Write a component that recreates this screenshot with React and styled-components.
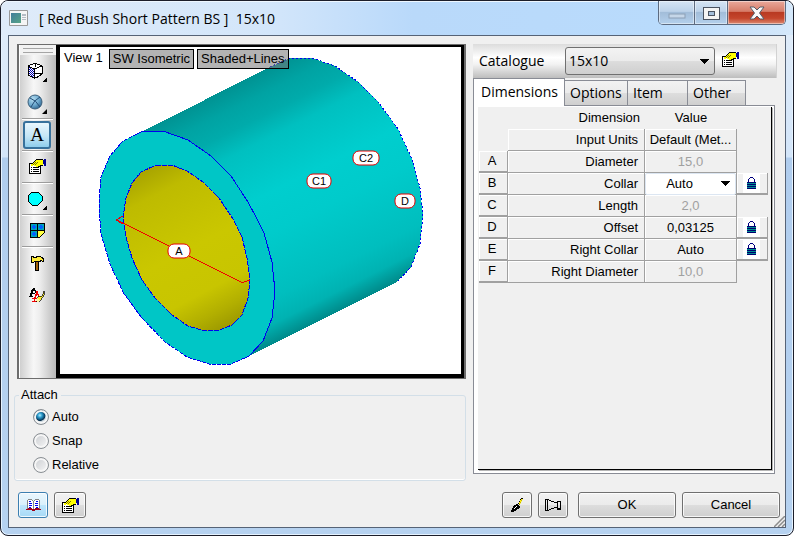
import React, { useState } from "react";
import styled, { createGlobalStyle, css } from "styled-components";

const ui = '"Liberation Sans", Arial, sans-serif';
const humanist = '"Open Sans", "Noto Sans", sans-serif';

const GlobalStyle = createGlobalStyle`
  *, *::before, *::after { box-sizing: border-box; }
  body { margin: 0; background: #fff; font: 13px/16px ${ui}; color: #000; }
  button, input, select { font: inherit; color: inherit; margin: 0; padding: 0; }
  svg { display: block; }
`;

const Window = styled.div`
  min-height: 100vh;
  display: flex;
  flex-direction: column;
  padding: 0 7px 7px;
  border: 1px solid #1c1e2a;
  border-radius: 8px;
  overflow: hidden;
  background: linear-gradient(#e2edf9 0, #d3e5f9 156px, #b0cdee 157px, #b6d2f0 100%);
  box-shadow: inset 0 0 0 1px #e6f3ff;
`;

const TitleBar = styled.header`
  display: flex;
  align-items: flex-start;
  height: 34px;
  margin: 0 -7px;
  padding: 0 7px 0 8px;
  border-radius: 7px 7px 0 0;
  background: linear-gradient(90deg, #dfebf9 0, #d3e6fa 34%, #b9d9fa 52%, #b9dbfc 84%, #d5e8fa 100%);
  box-shadow: inset 0 1px 0 #eef7ff;
`;

const AppIcon = styled.span`
  margin: 9px 11px 0 0;
`;

const Title = styled.h1`
  flex: 1;
  margin: 8px 0 0;
  font: 14px/20px ${humanist};
  white-space: pre;
`;

const WindowControls = styled.div`
  display: flex;
  border: 1px solid #5d6b80;
  border-top: 0;
  border-radius: 0 0 5px 5px;
  overflow: hidden;
`;

const ControlButton = styled.button`
  display: grid;
  place-items: center;
  width: ${(p) => p.$width}px;
  height: 23px;
  border: 0;
  border-left: ${(p) => (p.$first ? "0" : "1px solid #5d6b80")};
  background: ${(p) =>
    p.$danger
      ? "linear-gradient(#e9a99b 0, #d67c68 45%, #b93a22 50%, #c4452b 75%, #dc8a72 100%)"
      : "linear-gradient(#d5e4f4 0, #bcd2e9 45%, #a2bdd9 50%, #b4d0ec 100%)"};
  box-shadow: inset 0 0 0 1px rgba(255, 255, 255, 0.45);
`;

const Client = styled.main`
  position: relative;
  flex: 1;
  display: flex;
  flex-direction: column;
  gap: 11px;
  padding: 8px 5px 9px;
  border: 1px solid #566376;
  background: #f0f0f0;
`;

const Workspace = styled.div`
  flex: 1;
  display: flex;
  gap: 7px;
`;

const ModelColumn = styled.section`
  flex: 1;
  min-width: 0;
  display: flex;
  flex-direction: column;
  gap: 8px;
`;

const Viewer = styled.div`
  flex: 1;
  display: flex;
  margin-left: 3px;
  border: 2px solid #6d6d6d;
  border-width: 1px 2px 1px 2px;
  background: #000;
`;

const Toolbar = styled.div`
  width: 37px;
  display: flex;
  flex-direction: column;
  align-items: center;
  padding-right: 2px;
  border-left: 1px solid #fff;
  background: linear-gradient(90deg, #cfcfcf 0, #f7f7f7 38%, #ededed 55%, #b9b9b9 100%);
`;

const Grip = styled.div`
  align-self: stretch;
  margin-right: -2px;
  height: 10px;
  padding: 3px 3px 2px;
  background: #f2f2f2;
  &::before {
    content: "";
    display: block;
    height: 5px;
    border: solid #a5a5a5;
    border-width: 1px 0;
  }
`;

const ToolSlot = styled.div`
  width: 31px;
  height: 32px;
  display: grid;
  place-items: center;
  border-bottom: ${(p) => (p.$rule ? "1px solid #9c9c9c" : "0")};
  box-shadow: ${(p) => (p.$rule ? "0 1px 0 #fff" : "none")};
`;

const ToolButton = styled.button`
  width: 28px;
  height: 28px;
  display: grid;
  place-items: center;
  border: 2px solid transparent;
  border-radius: 3px;
  background: none;
  ${(p) =>
    p.$active &&
    css`
      border-color: #37719c;
      background: linear-gradient(#e8f6fd, #c4e5f6 55%, #8ecdec);
    `}
`;

const ToolLetter = styled.span`
  font: 19px/20px "Liberation Serif", serif;
`;

const Viewport = styled.div`
  position: relative;
  flex: 1;
  min-width: 0;
  margin: 2px 3px 4px 4px;
  background: #fff;
  overflow: hidden;
`;

const Scene = styled.svg`
  width: 100%;
  height: 100%;
`;

const ViewLabels = styled.div`
  position: absolute;
  top: 2px;
  left: 4px;
  display: flex;
  gap: 3px;
  line-height: 18px;
`;

const ViewName = styled.span`
  margin-right: 3px;
`;

const ViewButton = styled.button`
  height: 20px;
  padding: 0 3px;
  border: 1px solid #000;
  background: rgba(120, 120, 120, 0.56);
`;

const Group = styled.fieldset`
  height: 94px;
  margin: 0;
  padding: 2px 0 0 18px;
  border: 1px solid #d3dfe8;
  border-radius: 3px;
  box-shadow: inset 0 -1px 0 #fff;
`;

const Legend = styled.legend`
  margin-left: -14px;
  padding: 0 3px 0 2px;
`;

const RadioLabel = styled.label`
  display: flex;
  align-items: center;
  gap: 3px;
  height: 24px;
  line-height: 20px;
`;

const Radio = styled.input`
  appearance: none;
  width: 16px;
  height: 16px;
  border: 1px solid #8a8f94;
  border-radius: 50%;
  background: linear-gradient(135deg, #c9ccd0, #f8f8f8);
  box-shadow: inset 0 0 0 2px #f6f6f6;
  &:checked {
    background: radial-gradient(circle at 42% 38%, #b5ecff 0, #2fa0d0 18%, #0b4a73 38%, #0b304c 44%, #c8d4dc 50%);
  }
`;

const Properties = styled.section`
  width: 304px;
  display: flex;
  flex-direction: column;
  margin: 0 3px 7px 0;
`;

const CatalogueBar = styled.div`
  display: flex;
  align-items: center;
  height: 34px;
  padding: 0 6px;
  border: 1px solid #d2d2d2;
  border-width: 0 1px 0 0;
  background: linear-gradient(#dcdcdc 0, #fff 40%, #f2f2f2 60%, #bdbdbd 100%);
  font: 14px/20px ${humanist};
`;

const CatalogueLabel = styled.label`
  flex: 1;
`;

const SelectBox = styled.div`
  display: grid;
  align-items: center;
  & > * { grid-area: 1 / 1; }
  & > svg { justify-self: end; margin-right: ${(p) => p.$inset}px; pointer-events: none; }
`;

const CatalogueSelect = styled.select`
  appearance: none;
  width: 150px;
  height: 28px;
  padding-left: 3px;
  border: 1px solid #707070;
  border-radius: 3px;
  background: linear-gradient(#f3f3f3 0, #ebebeb 50%, #dcdcdc 52%, #cfcfcf 100%);
`;

const PlainButton = styled.button`
  margin: 0 31px 3px 7px;
  border: 0;
  background: none;
`;

const Tabs = styled.div`
  display: flex;
  align-items: flex-end;
  height: 27px;
`;

const Tab = styled.button`
  width: ${(p) => p.$width}px;
  height: 25px;
  padding-left: 5px;
  text-align: left;
  border: 1px solid #898c95;
  border-left-width: ${(p) => (p.$first ? "1px" : "0")};
  border-bottom: 0;
  background: linear-gradient(#f2f2f2 0, #ebebeb 50%, #dddddd 52%, #cfcfcf 100%);
  font: 14px/24px ${humanist};
  ${(p) =>
    p.$active &&
    css`
      height: 28px;
      margin-bottom: -1px;
      padding: 0 0 2px 7px;
      background: #fff;
      z-index: 1;
    `}
`;

const TabPanel = styled.div`
  flex: 1;
  width: 302px;
  padding: 1px 2px 3px 4px;
  border: 1px solid #898c95;
  background: #fff;
`;

const GridArea = styled.div`
  height: 100%;
  border: solid #000;
  border-width: 0 1px 1px 0;
  box-shadow: 1px 1px 0 #b5b5b5;
  background: #f0f0f0;
`;

const DimensionTable = styled.table`
  width: 289px;
  margin-left: 1px;
  table-layout: fixed;
  border-collapse: separate;
  border-spacing: 0;
`;

const Th = styled.th`
  height: 22px;
  padding: ${(p) => (p.$align === "right" ? "0 5px 0 0" : "0")};
  font-weight: normal;
  text-align: ${(p) => p.$align || "center"};
`;

const KeyCell = styled.th`
  height: 22px;
  padding: 0 2px 0 0;
  font-weight: normal;
  ${(p) =>
    p.$raised &&
    css`
      border: solid #a0a0a0;
      border-width: 0 1px 2px 0;
      box-shadow: inset 1px 1px 0 #fff;
    `}
`;

const NameCell = styled.td`
  height: 22px;
  padding: 0 6px 0 0;
  text-align: right;
  border: solid #a0a0a0;
  border-width: 0 1px 1px 0;
  box-shadow: inset 1px 1px 0 #fff;
`;

const ValueCell = styled.td`
  height: 22px;
  padding: 0;
  border: solid #a0a0a0;
  border-width: 0 1px 1px 0;
  box-shadow: inset 1px 1px 0 #fff;
`;

const ValueInput = styled.input`
  display: block;
  width: 100%;
  height: 20px;
  border: 0;
  background: none;
  text-align: center;
  &:disabled { color: #a0a0a0; }
`;

const UnitsButton = styled.button`
  width: 100%;
  height: 20px;
  border: 0;
  background: none;
  white-space: nowrap;
`;

const ValueSelect = styled.select`
  appearance: none;
  width: 100%;
  height: 22px;
  margin-bottom: -1px;
  padding-right: 22px;
  border: 1px solid #dce6f2;
  border-radius: 2px;
  background: #fff;
  text-align: center;
  text-align-last: center;
`;

const LockCell = styled.td`
  padding: 0;
`;

const LockButton = styled.button`
  display: grid;
  place-items: center;
  width: 31px;
  height: 22px;
  padding-right: 2px;
  border: solid #a0a0a0;
  border-width: 0 1px 2px 0;
  background: linear-gradient(90deg, #f0f0f0 6px, #fff 6px, #fff 23px, #f0f0f0 23px);
  box-shadow: inset 1px 1px 0 #fff;
`;

const Footer = styled.footer`
  display: flex;
  padding-left: 4px;
  gap: 6px;
`;

const PushButton = styled.button`
  display: grid;
  place-items: center;
  width: ${(p) => p.$width}px;
  height: 26px;
  border: 1px solid ${(p) => (p.$active ? "#3c7fb1" : "#707070")};
  border-radius: 3px;
  background: ${(p) =>
    p.$active
      ? "linear-gradient(#eaf6fd 0, #d9f0fc 49%, #bee6fd 51%, #a7d9f5 100%)"
      : "linear-gradient(#f2f2f2 0, #ebebeb 49%, #dddddd 51%, #cfcfcf 100%)"};
  box-shadow: inset 0 0 0 1px rgba(255, 255, 255, 0.8);
`;

const FooterSpace = styled.div`
  flex: 1;
`;

const CommandGroup = styled.div`
  display: flex;
  gap: 6px;
  margin-left: 4px;
`;

const ResizeGrip = styled.span`
  position: absolute;
  right: 0;
  bottom: 0;
`;

const Arrow = () => (
  <svg width="9" height="5" viewBox="0 0 9 5" shapeRendering="crispEdges" aria-hidden="true">
    <path d="M0 0h9L4.5 5z" />
  </svg>
);

const PropertiesIcon = () => (
  <svg width="17" height="15" viewBox="0 0 17 15" shapeRendering="crispEdges" aria-hidden="true">
    <path d="M0 4h12v11H0z" />
    <path d="M1 5h10v9H1z" fill="#fff" />
    <path d="M2 8h1v1H2zM4 8h6v1H4zM2 10h1v1H2zM4 10h6v1H4zM2 12h1v1H2zM4 12h6v1H4z" />
    <path d="M2 5h1V4h1V3h1V2h1V1h8v5h-3v1H9v1H7V7H5V6H4v1H2z" fill="#ffff00" />
    <path d="M7 0h7v1H7zM6 1h1v1H6zM5 2h1v1H5zM4 3h1v1H4zM3 4h1v1H3zM11 6h3v1h-3zM9 7h2v1H9zM6 8h3v1H6z" />
    <path d="M6 3h1v1H6zM8 3h1v1H8zM5 4h1v1H5zM7 4h1v1H7zM4 5h1v1H4zM6 5h1v1H6z" fill="#7d7600" />
    <path d="M14 1h1V0h2v7h-2V5h-1z" fill="#000090" />
  </svg>
);

const CubeIcon = () => (
  <svg width="22" height="22" viewBox="0 0 22 22" shapeRendering="crispEdges" aria-hidden="true">
    <defs>
      <pattern id="hatch" width="2" height="2" patternUnits="userSpaceOnUse">
        <path d="M0 0h2v2H0z" fill="#fff" />
        <path d="M0 0h1v1H0zM1 1h1v1H1z" fill="#0000b0" />
      </pattern>
    </defs>
    <path d="M2 6l7-3 7 3v8l-6 4-8-3z" fill="#fff" stroke="#000" />
    <path d="M2 6l6 3v9l-6-3z" fill="url(#hatch)" stroke="#000" />
    <path d="M8 9l8-3M9 3v4M9 13l7 1" fill="none" stroke="#000" />
    <path d="M21 17v5h-5z" />
  </svg>
);

const SphereIcon = () => (
  <svg width="22" height="22" viewBox="0 0 22 22" aria-hidden="true">
    <defs>
      <radialGradient id="ball" cx=".35" cy=".3" r=".7">
        <stop offset="0" stopColor="#b5dcf0" />
        <stop offset=".6" stopColor="#6fabd0" />
        <stop offset="1" stopColor="#3a719b" />
      </radialGradient>
    </defs>
    <circle cx="9" cy="10" r="7" fill="url(#ball)" stroke="#3d5f7a" />
    <path d="M4 6q6 2 10 9M14 5q-6 3-9 10" fill="none" stroke="#244f78" />
    <path d="M21 17v5h-5z" />
  </svg>
);

const OctagonIcon = () => (
  <svg width="22" height="22" viewBox="0 0 22 22" shapeRendering="crispEdges" aria-hidden="true">
    <path d="M6 4h6l4 4v5l-4 4H6l-4-4V8z" fill="#00ffff" stroke="#000" />
    <path d="M21 17v5h-5z" />
  </svg>
);

const PanesIcon = () => (
  <svg width="15" height="15" viewBox="0 0 15 15" shapeRendering="crispEdges" aria-hidden="true">
    <path d="M0 0h15v9l-6 6H0z" />
    <path d="M1 1h6v6H1zM8 1h6v6H8zM1 8h6v6H1z" fill="#00a5b5" />
    <path d="M2 3h4v2H2zM3 2h2v4H3zM9 3h4v2H9zM10 2h2v4h-2zM2 10h4v2H2zM3 9h2v4H3z" fill="#0060ff" />
    <path d="M8 8h6v1l-5 5H8z" fill="#ffff40" />
  </svg>
);

const HammerIcon = () => (
  <svg width="15" height="15" viewBox="0 0 15 15" shapeRendering="crispEdges" aria-hidden="true">
    <path d="M1 0h3v1h2V0h5v1h2v1h1v4h-2V5h-1v1H9v9H5V6H4v1H1z" />
    <path d="M2 1h1v1h4V1h4v1h1v1h1v2h-1V4h-2v1H4v1H2z" fill="#ffec38" />
    <path d="M6 6h2v8H6z" fill="#a5650b" />
  </svg>
);

const LabelEditIcon = () => (
  <svg width="16" height="16" viewBox="0 0 16 16" shapeRendering="crispEdges" aria-hidden="true">
    <path d="M4 1h2v2h1v3H6V4H4v2h2v1H3v2h1v1H0V9h1V6h1V3h1V2h1z" />
    <path d="M7 4h2v3h1v4H9V8H8v1H7v2H5v-1h1V7h1zM3 11h6v1H3zM5 12h1v2H5zM3 14h7v1H3z" fill="#f00000" />
    <path d="M15 4v4l-4 6-3 1-1-2 3-4 3 0z" fill="#ffee30" stroke="#000" strokeWidth=".7" />
    <path d="M8 11l3 3-3 1-1-2z" fill="#fff4a0" />
  </svg>
);

const LockIcon = () => (
  <svg width="9" height="12" viewBox="0 0 9 12" shapeRendering="crispEdges" aria-hidden="true">
    <path d="M3 0h3v1H3zM2 1h1v1H2zM6 1h1v1H6zM1 2h1v4H1zM7 2h1v4H7z" fill="#000080" />
    <path d="M0 5h9v7H0z" fill="#000070" />
    <path d="M0 6h9v1H0zM0 8h9v1H0zM0 10h9v1H0z" fill="#009090" />
  </svg>
);

const BookIcon = () => (
  <svg width="15" height="12" viewBox="0 0 15 12" shapeRendering="crispEdges" aria-hidden="true">
    <path d="M1 2h1V1h5v1h1V1h5v1h1v8H1z" fill="#fff" />
    <path d="M2 0h4v1H2zM9 0h4v1H9zM6 1h1v1H6zM8 1h1v1H8zM1 1h1v9H1zM13 1h1v9h-1zM7 2h1v8H7z" fill="#858585" />
    <path d="M3 2h2v1H3zM3 4h3v1H3zM3 6h3v1H3zM3 8h2v1H3zM10 2h2v1h-2zM9 4h3v1H9zM9 6h3v1H9zM10 8h2v1h-2z" fill="#0000ee" />
    <path d="M0 10h2V9h4v1h3V9h4v1h2v1H9v1H6v-1H0z" fill="#a00018" />
  </svg>
);

const BrushIcon = () => (
  <svg width="12" height="14" viewBox="0 0 12 14" shapeRendering="crispEdges" aria-hidden="true">
    <path d="M0 13v-1h1v-2h1V8h1V7h2V6h2v1h1v1h1v2H8v1H6v1H5v1H3v1H0z" />
    <path d="M7 5h1V3h1V1h1V0h2v1h-1v2h-1v2H9v2H8V6H7z" />
    <path d="M8 4h1V2h1V1h1v1h-1v2H9v2H8z" fill="#ffee00" stroke="#ffee00" strokeWidth=".5" />
    <path d="M3 10h1V9h1V8h1v1H5v1H4v1H3z" fill="#fff" />
  </svg>
);

const ReducerIcon = () => (
  <svg width="16" height="12" viewBox="0 0 16 12" shapeRendering="crispEdges" aria-hidden="true">
    <path
      d="M0 0h4v1h2v1h3v1h3V2h4v9h-4V9H9v1H6v1H4v1H0zM1 1v10h1V1zM3 1v10h1v-1h2V9h3V8h3V4H9V3H6V2H4V1zM13 3v6h2V3z"
      fillRule="evenodd"
    />
  </svg>
);

const ModelTag = ({ x, y, width, children }) => (
  <g>
    <rect x={x - width / 2} y={y - 7} width={width} height="14" rx="6" fill="#fff" stroke="#e80000" />
    <text x={x} y={y + 4} textAnchor="middle" fontFamily="Liberation Sans, Arial, sans-serif" fontSize="11">
      {children}
    </text>
  </g>
);

const frontRight =
  "141,132 163,131 188,140 211,156 231,176 248,202 257,219 264,233 272,262 275,291 272,318 263,341 249,356";
const frontLeft =
  "249,356 231,364 209,364 187,357 165,342 141,317 123,292 110,264 101,234 99,207 99,200 101,177 110,156 123,141 141,132";
const bore =
  "156,165 172,165 187,171 203,182 219,198 233,219 242,237 247,258 250,280 248,298 242,315 232,325 220,330 205,331 188,326 172,315 155,298 142,280 132,258 126,237 123,217 126,198 132,183 141,172";
const backEdge =
  "270,67 290,58 312,58 335,66 357,81 379,103 398,129 412,159 420,188 423,215 420,244 411,267 397,282";

const BushModel = () => (
  <Scene viewBox="60 47 401 327" preserveAspectRatio="xMidYMid meet" role="img" aria-label="Bush, isometric view">
    <defs>
      <linearGradient id="shell" gradientUnits="userSpaceOnUse" x1="200" y1="103" x2="311" y2="324">
        <stop offset="0" stopColor="#009393" />
        <stop offset=".08" stopColor="#00a3a3" />
        <stop offset=".16" stopColor="#00abab" />
        <stop offset=".25" stopColor="#00c0c0" />
        <stop offset=".45" stopColor="#00cece" />
        <stop offset=".6" stopColor="#00cbcb" />
        <stop offset=".84" stopColor="#00bebe" />
        <stop offset=".93" stopColor="#00b2b2" />
        <stop offset="1" stopColor="#008c8c" />
      </linearGradient>
      <linearGradient id="boreShade" gradientUnits="userSpaceOnUse" x1="145" y1="170" x2="229" y2="330">
        <stop offset="0" stopColor="#a8a400" />
        <stop offset=".15" stopColor="#bebb00" />
        <stop offset=".5" stopColor="#cac700" />
        <stop offset=".75" stopColor="#c8c500" />
        <stop offset=".88" stopColor="#b2af00" />
        <stop offset="1" stopColor="#999600" />
      </linearGradient>
    </defs>
    <g shapeRendering="crispEdges" fill="none" stroke="#0000f0">
      <polygon points={`141,132 ${backEdge} 249,356`} fill="url(#shell)" stroke="none" />
      <polyline points={backEdge} strokeDasharray="2 2" />
      <polygon points={`${frontRight} ${frontLeft}`} fill="#00c6c6" stroke="none" />
      <polyline points={frontRight} />
      <polyline points={frontLeft} strokeDasharray="4 1" />
      <polygon points={bore} fill="url(#boreShade)" strokeDasharray="5 1" />
      <path d="M123 216l-7 4 7 4M117 220l124 62h3l6-2" stroke="#f00000" />
    </g>
    <ModelTag x={179} y={251} width={22}>A</ModelTag>
    <ModelTag x={319} y={181} width={24}>C1</ModelTag>
    <ModelTag x={366} y={158} width={26}>C2</ModelTag>
    <ModelTag x={405} y={201} width={20}>D</ModelTag>
  </Scene>
);

const tools = [
  { name: "View direction", icon: <CubeIcon /> },
  { name: "Render style", icon: <SphereIcon />, rule: true },
  { name: "Labels", icon: <ToolLetter>A</ToolLetter>, rule: true, active: true },
  { name: "Settings", icon: <PropertiesIcon />, rule: true },
  { name: "Shape", icon: <OctagonIcon />, rule: true },
  { name: "Panes", icon: <PanesIcon />, rule: true },
  { name: "Build", icon: <HammerIcon /> },
  { name: "Edit labels", icon: <LabelEditIcon /> },
];

const rows = [
  { key: "A", name: "Diameter", value: "15,0", disabled: true },
  { key: "B", name: "Collar", value: "Auto", select: true, lock: true },
  { key: "C", name: "Length", value: "2,0", disabled: true },
  { key: "D", name: "Offset", value: "0,03125", lock: true },
  { key: "E", name: "Right Collar", value: "Auto", lock: true },
  { key: "F", name: "Right Diameter", value: "10,0", disabled: true },
];

const tabs = [
  { name: "Dimensions", width: 92 },
  { name: "Options", width: 63 },
  { name: "Item", width: 60 },
  { name: "Other", width: 58 },
];

export default function App() {
  const [attach, setAttach] = useState("Auto");
  const [tab, setTab] = useState("Dimensions");

  return (
    <Window>
      <GlobalStyle />
      <TitleBar>
        <AppIcon>
          <svg width="19" height="16" viewBox="0 0 19 16" aria-hidden="true">
            <defs>
              <linearGradient id="appScreen" x2="1" y2="1">
                <stop offset="0" stopColor="#427d9b" />
                <stop offset="1" stopColor="#57a487" />
              </linearGradient>
            </defs>
            <path d="M.5.500h18v15H.500z" fill="#f5f5f5" stroke="#999" />
            <path d="M2 3h10v10H2z" fill="url(#appScreen)" />
            <path d="M13 4h4v2h-4zM13 7h4v1h-4zM13 9h4v1h-4z" fill="#b5bcc5" />
          </svg>
        </AppIcon>
        <Title>{"[ Red Bush Short Pattern BS ]  15x10"}</Title>
        <WindowControls>
          <ControlButton $width={35} $first aria-label="Minimize">
            <svg width="18" height="13" viewBox="0 0 18 13">
              <rect x="1" y="8" width="16" height="4" fill="#c5d6e8" stroke="#8b9fb6" />
            </svg>
          </ControlButton>
          <ControlButton $width={33} aria-label="Maximize">
            <svg width="18" height="14" viewBox="0 0 18 14" shapeRendering="crispEdges">
              <path d="M1 1h16v12H1zM6 5v4h6V5z" fillRule="evenodd" fill="#f4f4f4" stroke="#4a5260" />
            </svg>
          </ControlButton>
          <ControlButton $width={58} $danger aria-label="Close">
            <svg width="16" height="14" viewBox="0 0 16 14">
              <path d="M1 1h4l3 3 3-3h4l-4.500 6 4.500 6h-4l-3-3-3 3H1l4.500-6z" fill="#fafafa" stroke="#555d69" />
            </svg>
          </ControlButton>
        </WindowControls>
      </TitleBar>

      <Client>
        <Workspace>
          <ModelColumn>
            <Viewer>
              <Toolbar role="toolbar" aria-label="View tools">
                <Grip />
                {tools.map((t) => (
                  <ToolSlot key={t.name} $rule={t.rule}>
                    <ToolButton $active={t.active} aria-label={t.name}>{t.icon}</ToolButton>
                  </ToolSlot>
                ))}
              </Toolbar>
              <Viewport>
                <BushModel />
                <ViewLabels>
                  <ViewName>View 1</ViewName>
                  <ViewButton>SW Isometric</ViewButton>
                  <ViewButton>Shaded+Lines</ViewButton>
                </ViewLabels>
              </Viewport>
            </Viewer>
            <Group>
              <Legend>Attach</Legend>
              {["Auto", "Snap", "Relative"].map((name) => (
                <RadioLabel key={name}>
                  <Radio type="radio" name="attach" checked={attach === name} onChange={() => setAttach(name)} />
                  {name}
                </RadioLabel>
              ))}
            </Group>
          </ModelColumn>

          <Properties>
            <CatalogueBar>
              <CatalogueLabel htmlFor="catalogue">Catalogue</CatalogueLabel>
              <SelectBox $inset={6}>
                <CatalogueSelect id="catalogue" defaultValue="15x10">
                  <option>15x10</option>
                </CatalogueSelect>
                <Arrow />
              </SelectBox>
              <PlainButton aria-label="Catalogue settings"><PropertiesIcon /></PlainButton>
            </CatalogueBar>
            <Tabs role="tablist">
              {tabs.map((t, i) => (
                <Tab
                  key={t.name}
                  role="tab"
                  aria-selected={tab === t.name}
                  $active={tab === t.name}
                  $first={i === 0}
                  $width={t.width}
                  onClick={() => setTab(t.name)}
                >
                  {t.name}
                </Tab>
              ))}
            </Tabs>
            <TabPanel role="tabpanel">
              <GridArea>
                <DimensionTable>
                  <colgroup>
                    <col width="29" />
                    <col width="137" />
                    <col width="92" />
                    <col width="31" />
                  </colgroup>
                  <thead>
                    <tr>
                      <Th />
                      <Th $align="right">Dimension</Th>
                      <Th>Value</Th>
                      <Th />
                    </tr>
                  </thead>
                  <tbody>
                    <tr>
                      <KeyCell />
                      <NameCell>Input Units</NameCell>
                      <ValueCell><UnitsButton>Default (Met...</UnitsButton></ValueCell>
                      <LockCell />
                    </tr>
                    {rows.map((r) => (
                      <tr key={r.key}>
                        <KeyCell scope="row" $raised>{r.key}</KeyCell>
                        <NameCell>{r.name}</NameCell>
                        <ValueCell>
                          {r.select ? (
                            <SelectBox $inset={6}>
                              <ValueSelect aria-label={r.name} defaultValue={r.value}>
                                <option>{r.value}</option>
                              </ValueSelect>
                              <Arrow />
                            </SelectBox>
                          ) : (
                            <ValueInput aria-label={r.name} defaultValue={r.value} disabled={r.disabled} />
                          )}
                        </ValueCell>
                        <LockCell>
                          {r.lock && <LockButton aria-label={`Lock ${r.name}`}><LockIcon /></LockButton>}
                        </LockCell>
                      </tr>
                    ))}
                  </tbody>
                </DimensionTable>
              </GridArea>
            </TabPanel>
          </Properties>
        </Workspace>

        <Footer>
          <PushButton $width={30} $active aria-label="Catalogue"><BookIcon /></PushButton>
          <PushButton $width={32} aria-label="Properties"><PropertiesIcon /></PushButton>
          <FooterSpace />
          <PushButton $width={30} aria-label="Match style"><BrushIcon /></PushButton>
          <PushButton $width={30} aria-label="Reducer"><ReducerIcon /></PushButton>
          <CommandGroup>
            <PushButton $width={98}>OK</PushButton>
            <PushButton $width={98}>Cancel</PushButton>
          </CommandGroup>
        </Footer>
        <ResizeGrip>
          <svg width="11" height="11" viewBox="0 0 11 11" aria-hidden="true">
            <path d="M0 11L11 0M4 11l7-7M8 11l3-3" stroke="#8c8c8c" strokeWidth="1.500" />
          </svg>
        </ResizeGrip>
      </Client>
    </Window>
  );
}
